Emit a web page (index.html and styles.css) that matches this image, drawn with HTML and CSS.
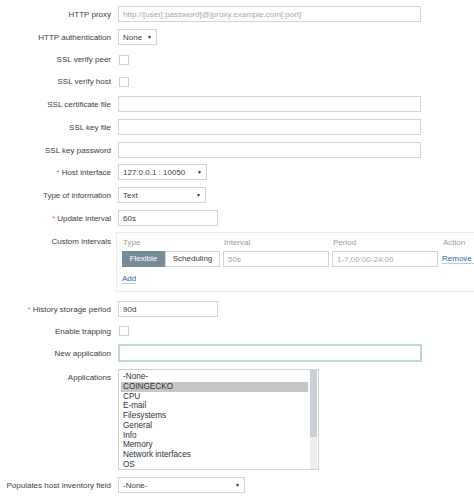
FILE: index.html
```html
<!DOCTYPE html>
<html lang="en">
<head>
  <meta charset="UTF-8" />
  <meta name="viewport" content="width=device-width, initial-scale=1.0" />
  <title>Item</title>
  <link rel="stylesheet" href="styles.css">
</head>
<body>
  <div class="form">
    <div class="row">
      <label class="label">HTTP proxy</label>
      <input class="text wide" type="text" placeholder="http://[user[:password]@]proxy.example.com[:port]">
    </div>
    <div class="row">
      <label class="label">HTTP authentication</label>
      <div class="select auth">None<span class="arrow">&#9660;</span></div>
    </div>
    <div class="row check-row">
      <label class="label">SSL verify peer</label>
      <span class="checkbox"></span>
    </div>
    <div class="row check-row">
      <label class="label">SSL verify host</label>
      <span class="checkbox"></span>
    </div>
    <div class="row">
      <label class="label">SSL certificate file</label>
      <input class="text wide" type="text">
    </div>
    <div class="row">
      <label class="label">SSL key file</label>
      <input class="text wide" type="text">
    </div>
    <div class="row">
      <label class="label">SSL key password</label>
      <input class="text wide" type="text">
    </div>
    <div class="row close">
      <label class="label"><span class="req">*</span> Host interface</label>
      <div class="select iface">127.0.0.1 : 10050<span class="arrow">&#9660;</span></div>
    </div>
    <div class="row">
      <label class="label">Type of information</label>
      <div class="select type">Text<span class="arrow">&#9660;</span></div>
    </div>
    <div class="row">
      <label class="label"><span class="req">*</span> Update interval</label>
      <input class="text short" type="text" value="60s">
    </div>
    <div class="row top close">
      <label class="label intervals-label">Custom intervals</label>
      <div class="intervals">
        <div class="intervals-grid">
          <div class="head">Type</div>
          <div class="head">Interval</div>
          <div class="head">Period</div>
          <div class="head action">Action</div>
          <div class="toggle">
            <span class="seg on">Flexible</span><span class="seg">Scheduling</span>
          </div>
          <input class="text cell" type="text" placeholder="50s">
          <input class="text cell" type="text" placeholder="1-7,00:00-24:00">
          <a class="link action" href="#">Remove</a>
        </div>
        <a class="link add" href="#">Add</a>
      </div>
    </div>
    <div class="row spaced">
      <label class="label"><span class="req">*</span> History storage period</label>
      <input class="text short" type="text" value="90d">
    </div>
    <div class="row check-row trap">
      <label class="label">Enable trapping</label>
      <span class="checkbox"></span>
    </div>
    <div class="row">
      <label class="label">New application</label>
      <input class="text wide focus" type="text">
    </div>
    <div class="row top">
      <label class="label apps-label">Applications</label>
      <div class="listbox">
        <div class="options">
          <div class="option">-None-</div>
          <div class="option selected">COINGECKO</div>
          <div class="option">CPU</div>
          <div class="option">E-mail</div>
          <div class="option">Filesystems</div>
          <div class="option">General</div>
          <div class="option">Info</div>
          <div class="option">Memory</div>
          <div class="option">Network interfaces</div>
          <div class="option">OS</div>
        </div>
        <div class="scrollbar"><div class="thumb"></div></div>
      </div>
    </div>
    <div class="row">
      <label class="label">Populates host inventory field</label>
      <div class="select inventory">-None-<span class="arrow">&#9660;</span></div>
    </div>
  </div>
</body>
</html>
```

FILE: styles.css
```css
body {
  margin: 0;
  padding: 0;
  background: #ffffff;
  font-family: "Liberation Sans", Arial, sans-serif;
  font-size: 8px;
  color: #3b4045;
}
.form {
  display: flex;
  flex-direction: column;
  gap: 7px;
  padding-top: 6px;
}
.row {
  display: flex;
  align-items: center;
  gap: 7px;
}
.row.top {
  align-items: flex-start;
}
.row.close {
  margin-top: -1px;
}
.row.spaced {
  margin-top: 2px;
}
.label {
  width: 111px;
  flex: none;
  text-align: right;
  white-space: nowrap;
}
.req {
  color: #d9534f;
  font-size: 7px;
}
.text {
  box-sizing: border-box;
  height: 16px;
  margin: 0;
  padding: 0 4px;
  border: 1px solid #d3d3d3;
  background: #fff;
  font-family: inherit;
  font-size: 8px;
  color: #3b4045;
  outline: none;
}
.text::placeholder {
  color: #a8a8a8;
}
.text.wide {
  width: 303px;
}
.text.short {
  width: 100px;
}
.text.focus {
  height: 18px;
  width: 304px;
  border: 2px solid #bddcc2;
}
.select {
  box-sizing: border-box;
  height: 16px;
  padding: 0 4px;
  border: 1px solid #d3d3d3;
  background: #fff;
  display: flex;
  align-items: center;
  justify-content: space-between;
  color: #3b4045;
}
.select .arrow {
  font-size: 5px;
  color: #222;
}
.select.auth {
  width: 39px;
}
.select.iface {
  width: 89px;
}
.select.type {
  width: 88px;
}
.select.inventory {
  width: 127px;
}
.check-row {
  height: 15px;
}
.check-row.trap {
  height: 12px;
  margin-top: 1px;
}
.checkbox {
  box-sizing: border-box;
  width: 10px;
  height: 10px;
  margin-left: 1px;
  border: 1px solid #cfcfcf;
  background: #fff;
}
.intervals-label {
  margin-top: 5px;
}
.intervals {
  flex: 1;
  margin-left: -2px;
  height: 60px;
  box-sizing: border-box;
  border: 1px solid #ececec;
  border-right: none;
  padding: 3px 0 0 5px;
}
.intervals-grid {
  display: grid;
  grid-template-columns: 98px 106px 106px auto;
  column-gap: 3px;
  row-gap: 2px;
  align-items: center;
}
.head {
  color: #9a9a9a;
  height: 13px;
  line-height: 13px;
  padding-left: 1px;
}
.action {
  margin-left: 1px;
}
.toggle {
  display: flex;
  height: 16px;
}
.seg {
  box-sizing: border-box;
  height: 16px;
  line-height: 14px;
  border: 1px solid #d3d3d3;
  background: #fff;
  color: #3b4045;
  text-align: center;
  width: 55px;
}
.seg.on {
  width: 43px;
  background: #768d99;
  border-color: #768d99;
  color: #fff;
}
.text.cell {
  width: 106px;
  color: #9a9a9a;
}
.link {
  color: #1f65a6;
  text-decoration: none;
  border-bottom: 1px solid #b9cde0;
  line-height: 9px;
}
.link.add {
  display: inline-block;
  margin-top: 7px;
}
.apps-label {
  margin-top: 4px;
}
.listbox {
  box-sizing: border-box;
  width: 201px;
  height: 101px;
  border: 1px solid #cfcfcf;
  display: flex;
  background: #fff;
}
.options {
  flex: 1;
  padding: 2px 2px 0 2px;
}
.option {
  height: 9.75px;
  line-height: 9.75px;
  padding-left: 2px;
  color: #2d3236;
  font-size: 8.2px;
}
.option.selected {
  background: #c6c6c6;
}
.scrollbar {
  width: 7px;
  background: #eeeeee;
  margin-right: 1px;
}
.thumb {
  height: 67px;
  background: #c9cfd6;
}
```
